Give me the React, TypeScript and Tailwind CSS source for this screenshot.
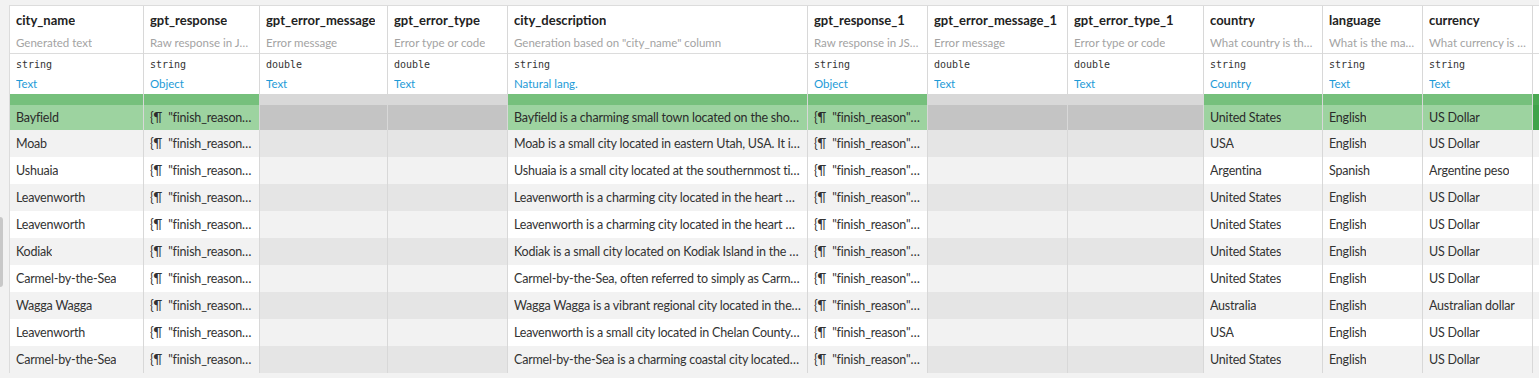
import React from "react";

type Col = {
  name: string;
  desc: string;
  type: string;
  meaning: string;
  w: string;
  kind: "normal" | "empty" | "dark";
  values: string[];
};

const resp = '{¶\u2002"finish_reason": "stop", "index": 0, "message": {}}';

const cities = [
  "Bayfield",
  "Moab",
  "Ushuaia",
  "Leavenworth",
  "Leavenworth",
  "Kodiak",
  "Carmel-by-the-Sea",
  "Wagga Wagga",
  "Leavenworth",
  "Carmel-by-the-Sea",
];

const descs = [
  "Bayfield is a charming small town located on the shores of Lake Superior in northern Wisconsin.",
  "Moab is a small city located in eastern Utah, USA. It is known for its red rock landscapes.",
  "Ushuaia is a small city located at the southernmost tip of Argentina, in Tierra del Fuego.",
  "Leavenworth is a charming city located in the heart of the Cascade Mountains in Washington.",
  "Leavenworth is a charming city located in the heart of Washington State's Cascade Mountains.",
  "Kodiak is a small city located on Kodiak Island in the Gulf of Alaska.",
  "Carmel-by-the-Sea, often referred to simply as Carmel, is a small beach city in California.",
  "Wagga Wagga is a vibrant regional city located in the Riverina region of New South Wales.",
  "Leavenworth is a small city located in Chelan County, Washington, United States.",
  "Carmel-by-the-Sea is a charming coastal city located on the Monterey Peninsula.",
];

const countries = [
  "United States",
  "USA",
  "Argentina",
  "United States",
  "United States",
  "United States",
  "United States",
  "Australia",
  "USA",
  "United States",
];
const languages = [
  "English",
  "English",
  "Spanish",
  "English",
  "English",
  "English",
  "English",
  "English",
  "English",
  "English",
];
const currencies = [
  "US Dollar",
  "US Dollar",
  "Argentine peso",
  "US Dollar",
  "US Dollar",
  "US Dollar",
  "US Dollar",
  "Australian dollar",
  "US Dollar",
  "US Dollar",
];

const empty = Array(10).fill("");
const resps = Array(10).fill(resp);

const columns: Col[] = [
  { name: "city_name", desc: "Generated text", type: "string", meaning: "Text", w: "w-[134px]", kind: "normal", values: cities },
  { name: "gpt_response", desc: "Raw response in JSON format", type: "string", meaning: "Object", w: "w-[116px]", kind: "normal", values: resps },
  { name: "gpt_error_message", desc: "Error message", type: "double", meaning: "Text", w: "w-[128px]", kind: "empty", values: empty },
  { name: "gpt_error_type", desc: "Error type or code", type: "double", meaning: "Text", w: "w-[120px]", kind: "empty", values: empty },
  { name: "city_description", desc: 'Generation based on "city_name" column', type: "string", meaning: "Natural lang.", w: "w-[300px]", kind: "normal", values: descs },
  { name: "gpt_response_1", desc: "Raw response in JSON format", type: "string", meaning: "Object", w: "w-[120px]", kind: "normal", values: resps },
  { name: "gpt_error_message_1", desc: "Error message", type: "double", meaning: "Text", w: "w-[140px]", kind: "empty", values: empty },
  { name: "gpt_error_type_1", desc: "Error type or code", type: "double", meaning: "Text", w: "w-[136px]", kind: "empty", values: empty },
  { name: "country", desc: "What country is the city located in?", type: "string", meaning: "Country", w: "w-[119px]", kind: "normal", values: countries },
  { name: "language", desc: "What is the main language spoken there?", type: "string", meaning: "Text", w: "w-[100px]", kind: "normal", values: languages },
  { name: "currency", desc: "What currency is used there?", type: "string", meaning: "Text", w: "w-[110px]", kind: "normal", values: currencies },
  { name: "gpt_response_2", desc: "Raw response in JSON format", type: "string", meaning: "Object", w: "w-[120px]", kind: "dark", values: resps },
];

function cellBg(kind: Col["kind"], i: number): string {
  if (kind === "normal") {
    if (i === 0) return "bg-[#9dd3a0] text-[#2b2b2b]";
    return i % 2 === 1 ? "bg-[#f2f2f2] text-[#333333]" : "bg-white text-[#333333]";
  }
  if (kind === "empty") {
    if (i === 0) return "bg-[#c4c4c4]";
    return i % 2 === 1 ? "bg-[#e5e5e5]" : "bg-[#f2f2f2]";
  }
  if (i === 0) return "bg-[#3fa34a] text-white";
  return i % 2 === 1 ? "bg-[#f2f2f2] text-[#333333]" : "bg-white text-[#333333]";
}

function barBg(kind: Col["kind"]): string {
  if (kind === "normal") return "bg-[#76c07c]";
  if (kind === "empty") return "bg-[#d8d8d8]";
  return "bg-[#4aa952]";
}

function Column({ col }: { col: Col }) {
  return (
    <div className={`${col.w} shrink-0 flex flex-col border-r border-[#d8d8d8]`}>
      <div className="bg-white">
        <div className="h-[27px] flex items-center px-[6px]">
          <div className="truncate text-[13px] font-bold text-[#222222] leading-[18px]">{col.name}</div>
        </div>
        <div className="h-[20px] flex items-center px-[6px]">
          <div className="truncate text-[11.5px] text-[#a3a3a3] leading-[14px]">{col.desc}</div>
        </div>
      </div>
      <div className="bg-white border-t border-[#dcdcdc] h-[41px] flex flex-col px-[6px]">
        <div className="h-[20px] flex items-center text-[10px] text-[#333333] font-['DejaVu_Sans_Mono',monospace]">
          {col.type}
        </div>
        <div className="h-[20px] flex items-center text-[11.5px] text-[#1e9bd7] truncate">{col.meaning}</div>
      </div>
      <div className={`h-[11px] ${barBg(col.kind)}`} />
      {col.values.map((v, i) => (
        <div
          key={i}
          className={`${i === 0 ? "h-[25px]" : "h-[27px]"} flex items-center px-[6px] ${cellBg(col.kind, i)}`}
        >
          <div className="truncate text-[12.5px] tracking-[-0.2px] leading-[18px]">{v}</div>
        </div>
      ))}
    </div>
  );
}

export default function App() {
  return (
    <div className="relative w-[1539px] h-[378px] overflow-hidden bg-[#f2f2f2] font-['Lato',sans-serif]">
      <div className="absolute left-0 top-[217px] w-[3px] h-[70px] rounded-r-[3px] bg-[#c8c8c8]" />
      <div className="pl-[9px] pt-[5px]">
        <div className="flex border-l border-t border-[#dcdcdc] w-max">
          {columns.map((c) => (
            <Column key={c.name} col={c} />
          ))}
        </div>
      </div>
    </div>
  );
}
